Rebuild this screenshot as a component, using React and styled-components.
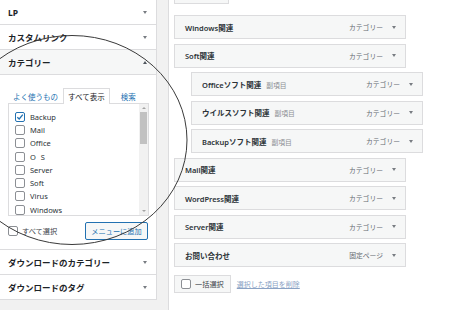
import React from 'react';
import styled, { createGlobalStyle } from 'styled-components';

const GlobalStyle = createGlobalStyle`
    body {
        margin: 0;
        background: #f1f1f1;
        font-family: "Noto Sans", "Noto Sans CJK JP", sans-serif;
        color: #1d2327;
    }
`;

const Page = styled.div`
    position: relative;
    display: flex;
    width: 474px;
    height: 310px;
    overflow: hidden;
    background: #f1f1f1;
`;

const LeftPanel = styled.div`
    width: 156px;
    align-self: flex-start;
    background: #fff;
    border-right: 1px solid #dcdcde;
    border-bottom: 1px solid #dcdcde;
`;

const SectionHead = styled.div`
    display: flex;
    align-items: center;
    justify-content: space-between;
    height: 24px;
    padding: 0 9px 0 8px;
    border-bottom: 1px solid #dcdcde;
    background: ${props => (props.$open ? '#f6f7f7' : '#fff')};
    font-size: 8.5px;
    font-weight: 700;
    &:last-child {
        border-bottom: none;
    }
`;

const Arrow = styled.span`
    width: 0;
    height: 0;
    border-left: 2.5px solid transparent;
    border-right: 2.5px solid transparent;
    ${props =>
        props.$up
            ? 'border-bottom: 3px solid #50575e;'
            : 'border-top: 3px solid #787c82;'}
`;

const SectionBody = styled.div`
    padding: 12px 7px 9px 8px;
    border-bottom: 1px solid #dcdcde;
`;

const Tabs = styled.div`
    display: flex;
    align-items: flex-end;
    height: 16px;
    font-size: 7.5px;
`;

const Tab = styled.div`
    display: flex;
    align-items: center;
    height: 15px;
    padding: 0 4px;
    margin-right: ${props => props.$gap || 0}px;
    color: ${props => (props.$active ? '#1d2327' : '#2271b1')};
    background: ${props => (props.$active ? '#fff' : 'transparent')};
    border: 1px solid ${props => (props.$active ? '#dcdcde' : 'transparent')};
    border-bottom: none;
    margin-bottom: -1px;
    position: relative;
    z-index: 1;
`;

const ListBox = styled.div`
    display: flex;
    height: 111px;
    border: 1px solid #dcdcde;
    overflow: hidden;
`;

const List = styled.div`
    flex: 1;
    padding: 6px 0 0 6px;
`;

const ListItem = styled.label`
    display: flex;
    align-items: center;
    gap: 5px;
    height: 13.3px;
    font-size: 7.5px;
    color: #2c3338;
    letter-spacing: ${props => (props.$spaced ? '1.5px' : '0')};
`;

const Box = styled.span`
    display: flex;
    align-items: center;
    justify-content: center;
    flex: none;
    width: 8px;
    height: 8px;
    border: 1px solid ${props => (props.$checked ? '#2271b1' : '#8c8f94')};
    border-radius: 2px;
    background: #fff;
`;

const Scrollbar = styled.div`
    display: flex;
    flex-direction: column;
    align-items: center;
    width: 9px;
    background: #f1f1f1;
    padding: 2px 0;
`;

const ScrollBtn = styled.span`
    width: 0;
    height: 0;
    margin: 1px 0 3px;
    border-left: 2px solid transparent;
    border-right: 2px solid transparent;
    ${props =>
        props.$down
            ? 'border-top: 2.5px solid #a3a3a3; margin: auto 0 1px;'
            : 'border-bottom: 2.5px solid #a3a3a3;'}
`;

const Thumb = styled.div`
    width: 7px;
    height: 32px;
    background: #c1c1c1;
`;

const Footer = styled.div`
    display: flex;
    align-items: center;
    justify-content: space-between;
    margin-top: 6px;
`;

const SelectAll = styled.label`
    display: flex;
    align-items: center;
    gap: 4px;
    font-size: 7.2px;
    color: #3c434a;
`;

const AddButton = styled.div`
    display: flex;
    align-items: center;
    justify-content: center;
    width: 61px;
    height: 16px;
    margin-right: 1px;
    border: 1px solid #2271b1;
    border-radius: 2px;
    background: #f6f7f7;
    color: #2271b1;
    font-size: 7.2px;
`;

const Gutter = styled.div`
    width: 11px;
`;

const RightPanel = styled.div`
    flex: 1;
    background: #fff;
    border-left: 1px solid #dcdcde;
    padding-left: 5px;
`;

const TopStub = styled.div`
    width: 53px;
    height: 3px;
    background: #f6f7f7;
    border: 1px solid #dcdcde;
    border-top: none;
    margin-bottom: 11px;
`;

const MenuItem = styled.div`
    display: flex;
    align-items: center;
    justify-content: space-between;
    box-sizing: border-box;
    width: 232px;
    height: 24px;
    margin: 0 0 4.5px ${props => (props.$sub ? 17 : 0)}px;
    padding: 0 9px 0 10px;
    background: #f6f7f7;
    border: 1px solid #dcdcde;
`;

const ItemTitle = styled.span`
    font-size: 7.5px;
    font-weight: 600;
    color: #2c3338;
`;

const SubNote = styled.span`
    margin-left: 5px;
    font-size: 6.8px;
    font-weight: 400;
    color: #8c8f94;
`;

const ItemMeta = styled.span`
    display: flex;
    align-items: center;
    gap: 9px;
    font-size: 6.8px;
    color: #646970;
`;

const BulkRow = styled.div`
    display: flex;
    align-items: center;
    gap: 6px;
    margin-top: 8px;
`;

const BulkBox = styled.label`
    display: flex;
    align-items: center;
    gap: 4px;
    height: 16px;
    padding: 0 6px;
    background: #f6f7f7;
    border: 1px solid #dcdcde;
    font-size: 7.2px;
    color: #3c434a;
`;

const DeleteLink = styled.span`
    font-size: 7px;
    color: #8aa2c4;
    text-decoration: underline;
`;

const Overlay = styled.svg`
    position: absolute;
    left: 0;
    top: 0;
    pointer-events: none;
`;

const Check = () => (
    <svg width="8" height="8" viewBox="0 0 8 8">
        <path d="M1.3 4.2 L3.2 6 L6.8 1.6" fill="none" stroke="#2271b1" strokeWidth="1.3" />
    </svg>
);

const categories = ['Backup', 'Mail', 'Office', 'O S', 'Server', 'Soft', 'Virus', 'Windows'];

const menuItems = [
    { title: 'Windows関連', type: 'カテゴリー' },
    { title: 'Soft関連', type: 'カテゴリー' },
    { title: 'Officeソフト関連', type: 'カテゴリー', sub: true },
    { title: 'ウイルスソフト関連', type: 'カテゴリー', sub: true },
    { title: 'Backupソフト関連', type: 'カテゴリー', sub: true },
    { title: 'Mail関連', type: 'カテゴリー' },
    { title: 'WordPress関連', type: 'カテゴリー' },
    { title: 'Server関連', type: 'カテゴリー' },
    { title: 'お問い合わせ', type: '固定ページ' },
];

const App = () => (
    <Page>
        <GlobalStyle />
        <LeftPanel>
            <SectionHead>
                LP
                <Arrow />
            </SectionHead>
            <SectionHead>
                カスタムリンク
                <Arrow />
            </SectionHead>
            <SectionHead $open>
                カテゴリー
                <Arrow $up />
            </SectionHead>
            <SectionBody>
                <Tabs>
                    <Tab $gap={0}>よく使うもの</Tab>
                    <Tab $active $gap={6}>すべて表示</Tab>
                    <Tab>検索</Tab>
                </Tabs>
                <ListBox>
                    <List>
                        {categories.map((c, i) => (
                            <ListItem key={c} $spaced={c === 'O S'}>
                                <Box $checked={i === 0}>{i === 0 && <Check />}</Box>
                                {c}
                            </ListItem>
                        ))}
                    </List>
                    <Scrollbar>
                        <ScrollBtn />
                        <Thumb />
                        <ScrollBtn $down />
                    </Scrollbar>
                </ListBox>
                <Footer>
                    <SelectAll>
                        <Box />
                        すべて選択
                    </SelectAll>
                    <AddButton>メニューに追加</AddButton>
                </Footer>
            </SectionBody>
            <SectionHead>
                ダウンロードのカテゴリー
                <Arrow />
            </SectionHead>
            <SectionHead>
                ダウンロードのタグ
                <Arrow />
            </SectionHead>
        </LeftPanel>
        <Gutter />
        <RightPanel>
            <TopStub />
            {menuItems.map(item => (
                <MenuItem key={item.title} $sub={item.sub}>
                    <ItemTitle>
                        {item.title}
                        {item.sub && <SubNote>副項目</SubNote>}
                    </ItemTitle>
                    <ItemMeta>
                        {item.type}
                        <Arrow />
                    </ItemMeta>
                </MenuItem>
            ))}
            <BulkRow>
                <BulkBox>
                    <Box />
                    一括選択
                </BulkBox>
                <DeleteLink>選択した項目を削除</DeleteLink>
            </BulkRow>
        </RightPanel>
        <Overlay width="474" height="310">
            <ellipse cx="72" cy="140" rx="115" ry="104.5" fill="none" stroke="#3a3a3a" strokeWidth="1" />
        </Overlay>
    </Page>
);

export default App;
